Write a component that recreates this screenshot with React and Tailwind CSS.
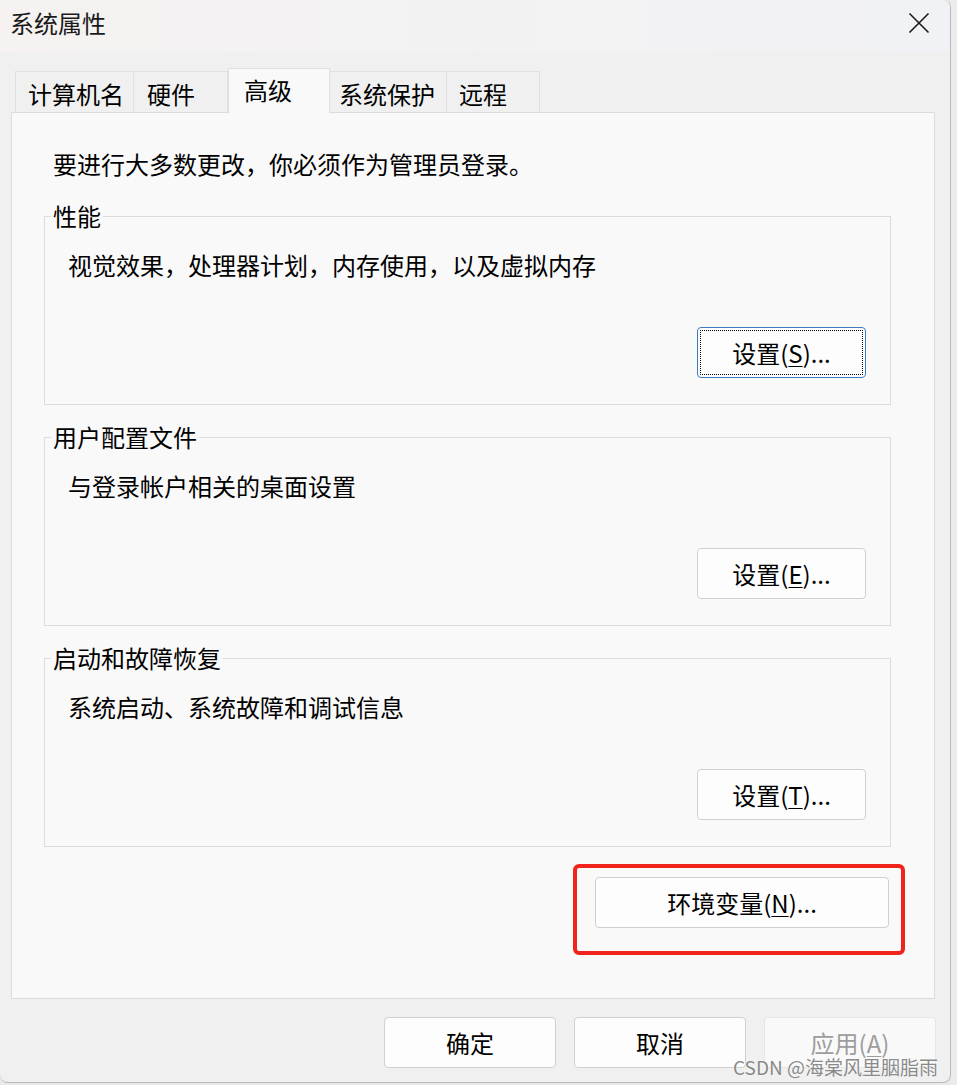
import React from 'react';

const font = { fontFamily: '"Noto Sans CJK SC", "Noto Sans", sans-serif' };

const tabs = [
    { label: '计算机名', w: 'w-[119px]', pl: 'pl-[12px]' },
    { label: '硬件', w: 'w-[95px]', pl: 'pl-[13px]' },
    { label: '高级', w: 'w-[102px]', pl: 'pl-[15px]', active: true },
    { label: '系统保护', w: 'w-[118px]', pl: 'pl-[9px]' },
    { label: '远程', w: 'w-[94px]', pl: 'pl-[12px]' },
];

const Key = ({ k }) => <span className="underline underline-offset-[3px] decoration-1">{k}</span>;

const WinButton = ({ children, focused, disabled, className = '' }) => (
    <button
        className={`h-[51px] rounded-[4px] border text-[24px] leading-none flex items-center justify-center ${
            focused
                ? 'border-[#3f7cbf] bg-[#fdfdfd] outline-1 outline-dotted outline-black outline-offset-[-4px]'
                : disabled
                ? 'border-[#e6e6e6] bg-[#f9f9f9] text-[#9d9d9d]'
                : 'border-[#d0d0d0] bg-[#fdfdfd] text-black'
        } ${className}`}
    >
        {children}
    </button>
);

const GroupBox = ({ title, text, btnKey, focused }) => (
    <fieldset className="ml-[32px] w-[847px] border border-[#dcdcdc] px-0 pb-[26px]">
        <legend className="ml-[6px] px-[2px] text-[24px] leading-[32px] text-black">{title}</legend>
        <p className="mt-[17px] pl-[23px] text-[24px] leading-[32px] text-black">{text}</p>
        <div className="mt-[46px] flex justify-end pr-[24px]">
            <WinButton focused={focused} className="w-[169px]">
                设置(<Key k={btnKey} />)...
            </WinButton>
        </div>
    </fieldset>
);

export default function App() {
    return (
        <div className="w-[957px] h-[1085px] flex bg-[#e9e9e9] overflow-hidden" style={font}>
            <div className="relative w-[951px] h-[1083px] flex flex-col bg-[#f0f0f0] border-r border-b border-[#b9b9b9] rounded-tr-[8px] rounded-b-[8px] overflow-hidden">
                {/* Title bar */}
                <div className="h-[52px] shrink-0 flex items-center justify-between pl-[10px] pr-[20px] pb-[6px] bg-gradient-to-r from-[#f5f2f1] to-[#f1f2f5]">
                    <span className="text-[24px] leading-none text-[#1a1a1a]">系统属性</span>
                    <svg width="22" height="22" viewBox="0 0 22 22" fill="none" stroke="#1a1a1a" strokeWidth="1.6">
                        <path d="M1.5 1.5 L20.5 20.5 M20.5 1.5 L1.5 20.5" />
                    </svg>
                </div>

                {/* Tabs */}
                <div className="mt-[16px] pl-[15px] flex items-end">
                    {tabs.map((t) => (
                        <div
                            key={t.label}
                            className={`${t.w} ${t.pl} border border-b-0 border-[#e0e0e0] text-[24px] text-black flex items-center ${
                                t.active
                                    ? 'h-[45px] bg-[#f9f9f9] -mb-px relative z-10 pb-[2px]'
                                    : 'h-[41px] bg-[#f0f0f0] -ml-px first:ml-0 pt-[4px]'
                            }`}
                        >
                            {t.label}
                        </div>
                    ))}
                </div>

                {/* Panel */}
                <div className="ml-[11px] w-[924px] h-[887px] shrink-0 border border-[#dcdcdc] bg-[#f9f9f9] flex flex-col">
                    <p className="mt-[35px] pl-[41px] text-[24px] leading-[32px] text-black">
                        要进行大多数更改，你必须作为管理员登录。
                    </p>
                    <div className="mt-[20px] flex flex-col gap-[16px]">
                        <GroupBox title="性能" text="视觉效果，处理器计划，内存使用，以及虚拟内存" btnKey="S" focused />
                        <GroupBox title="用户配置文件" text="与登录帐户相关的桌面设置" btnKey="E" />
                        <GroupBox title="启动和故障恢复" text="系统启动、系统故障和调试信息" btnKey="T" />
                    </div>
                    <div className="mt-[17px] flex justify-end pr-[29px]">
                        <div className="w-[332px] border-[4px] border-[#f0241c] rounded-[6px] pt-[9px] pb-[23px] pl-[18px] pr-[12px]">
                            <WinButton className="w-[294px]">
                                环境变量(<Key k="N" />)...
                            </WinButton>
                        </div>
                    </div>
                </div>

                {/* Bottom buttons */}
                <div className="mt-[18px] flex justify-end gap-[18px] pr-[14px]">
                    <WinButton className="w-[172px]">确定</WinButton>
                    <WinButton className="w-[172px]">取消</WinButton>
                    <WinButton disabled className="w-[172px]">
                        应用(<Key k="A" />)
                    </WinButton>
                </div>

                {/* Watermark */}
                <span className="absolute right-[12px] bottom-[6px] text-[19px] leading-none text-[#8a8a8a] [text-shadow:0_0_2px_#fff]">
                    CSDN @海棠风里胭脂雨
                </span>
            </div>
            <div className="w-[6px] h-full bg-[#ececec]" />
        </div>
    );
}
